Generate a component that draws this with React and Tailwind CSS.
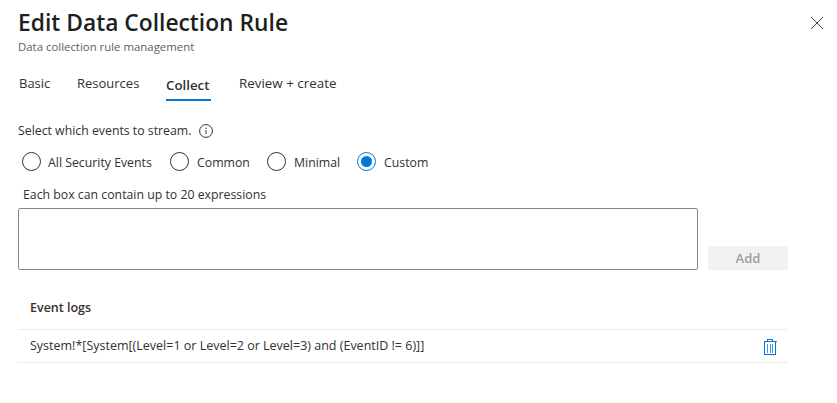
const Radio = ({ label, checked, className, labelClass = "ml-[8px]" }) => (
	<div className={`flex items-center ${className}`}>
		<span
			className={`w-[19px] h-[19px] rounded-full border flex items-center justify-center ${
				checked ? "border-[#0078d4]" : "border-[#323130]"
			}`}
		>
			{checked && <span className="w-[11px] h-[11px] rounded-full bg-[#0078d4]"></span>}
		</span>
		<span className={`${labelClass} mt-[3px] text-[12.3px] leading-[18px] text-[#323130]`}>{label}</span>
	</div>
);

const Tab = ({ label, active, className, textClass = "text-[13px]" }) => (
	<div className={`flex flex-col ${className}`}>
		<span className={`${textClass} leading-[18px] text-[#323130] ${active ? "font-semibold mt-[2px]" : ""}`}>{label}</span>
		{active && <span className="h-[2px] bg-[#0078d4] mt-[5px]"></span>}
	</div>
);

export default function App() {
	return (
		<div className="relative w-[837px] h-[403px] bg-white overflow-hidden pl-[18px] pt-[9px] font-['Open_Sans','Noto_Sans',sans-serif]">
			<h1 className="text-[22.8px] leading-[28px] font-semibold text-[#201f1e]">Edit Data Collection Rule</h1>
			<p className="text-[11.4px] leading-[14px] mt-[3px] text-[#605e5c]">Data collection rule management</p>

			<div className="flex items-start mt-[20px] pl-[1px]">
				<Tab label="Basic" className="w-[58px]" />
				<Tab label="Resources" className="w-[89px]" />
				<Tab label="Collect" active className="w-[45px]" textClass="text-[13.3px]" />
				<Tab label="Review + create" className="ml-[28px]" textClass="text-[13.4px]" />
			</div>

			<div className="flex items-center mt-[21px] h-[18px]">
				<span className="text-[12.3px] leading-[18px] text-[#323130]">Select which events to stream.</span>
				<svg className="ml-[8px]" width="14" height="14" viewBox="0 0 14 14" fill="none">
					<circle cx="7" cy="7" r="6.4" stroke="#323130" strokeWidth="1" />
					<path d="M7 6v4.2" stroke="#323130" strokeWidth="1" />
					<circle cx="7" cy="4.2" r="0.7" fill="#323130" />
				</svg>
			</div>

			<div className="flex items-center mt-[11px] pl-[4px]">
				<Radio label="All Security Events" className="w-[148px]" labelClass="ml-[7px]" />
				<Radio label="Common" className="w-[97px]" />
				<Radio label="Minimal" className="w-[90px]" />
				<Radio label="Custom" checked />
			</div>

			<p className="mt-[14px] pl-[5px] text-[12.3px] leading-[18px] text-[#323130]">Each box can contain up to 20 expressions</p>

			<div className="flex items-end mt-[4px]">
				<div className="w-[680px] h-[62px] border border-[#8a8886] rounded-[2px]"></div>
				<button className="ml-[10px] w-[80px] h-[24px] pt-[2px] bg-[#f3f2f1] rounded-[2px] text-[13px] font-semibold text-[#a19f9d]">Add</button>
			</div>

			<div className="w-[770px] mt-[26px]">
				<div className="h-[34px] pl-[12px] pt-[3px] flex items-start text-[12.5px] font-semibold text-[#323130] border-b border-[#edebe9]">Event logs</div>
				<div className="h-[33px] pl-[12px] pr-[11px] flex items-center justify-between text-[12.5px] text-[#323130] border-b border-[#edebe9]">
					<span>System!*[System[(Level=1 or Level=2 or Level=3) and (EventID != 6)]]</span>
					<svg width="14" height="17" viewBox="0 0 14 17" fill="none" shapeRendering="crispEdges">
						<path d="M0.5 3.5h13M4.5 3.5v-2h5v2M1.5 3.5v13h11v-13" stroke="#0a6fe8" strokeWidth="1" />
						<path d="M4.5 6v8.5M7 6v8.5M9.5 6v8.5" stroke="#35a0e0" strokeWidth="1" />
					</svg>
				</div>
			</div>

			<svg className="absolute left-[810px] top-[16px]" width="14" height="14" viewBox="0 0 14 14" fill="none">
				<path d="M1 1l12 12M13 1L1 13" stroke="#484644" strokeWidth="1" />
			</svg>
		</div>
	);
}
